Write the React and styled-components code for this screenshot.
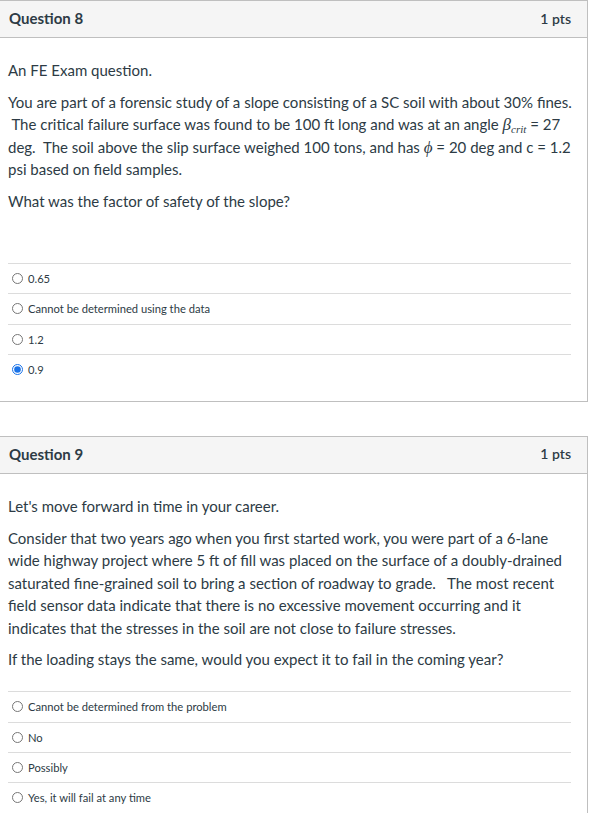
import React from "react";
import styled, { createGlobalStyle } from "styled-components";

const Global = createGlobalStyle`
  html, body { margin: 0; padding: 0; background: #fff; }
  body { font-family: Lato, "Noto Sans", "Liberation Sans", sans-serif; color: #2d3b45; }
`;

const Page = styled.div`
  width: 589px;
  margin-left: -1px;
  display: flex;
  flex-direction: column;
  gap: 34px;
`;

const Card = styled.section`
  border: 1px solid #bfbfbf;
  background: #fff;
  padding-bottom: 16.5px;
`;

const Header = styled.header`
  box-sizing: border-box;
  height: 37px;
  display: flex;
  align-items: center;
  justify-content: space-between;
  padding: 0 16px 2px 9px;
  background: #f5f5f5;
  border-bottom: 1px solid #bfbfbf;
`;

const Title = styled.h2`
  margin: 0;
  font-size: 15px;
  font-weight: 700;
  color: #2d3b45;
`;

const Points = styled.span`
  font-size: 14px;
  font-weight: 600;
  color: #2d3b45;
`;

const Text = styled.div`
  padding: 12.25px 8px 11.75px 8px;
  font-size: 15px;
  line-height: 22.5px;
  p { margin: 9px 0; }
`;

const Blank = styled.p`
  line-height: 21px;
`;

const MathVar = styled.span`
  font-family: "Liberation Serif", "DejaVu Serif", serif;
  font-style: italic;
  font-size: 17px;
  line-height: 0;
  sub {
    font-size: 11px;
    line-height: 0;
    vertical-align: baseline;
    position: relative;
    top: 3px;
  }
`;

const Answers = styled.div`
  margin: 0 16px 0 8px;
`;

const Row = styled.label`
  height: 29.33px;
  border-top: 1px solid #dcdcdc;
  display: flex;
  align-items: center;
  gap: 5px;
  padding-left: 4px;
  font-size: 11.2px;
  color: #2d3b45;
`;

const Radio = styled.input.attrs({ type: "radio" })`
  width: 11px;
  height: 11px;
  margin: 0;
  accent-color: #1a73e8;
`;

function Question({ n, children, answers, name, checked }) {
  return (
    <Card>
      <Header>
        <Title>Question {n}</Title>
        <Points>1 pts</Points>
      </Header>
      <Text>{children}</Text>
      <Answers>
        {answers.map((a) => (
          <Row key={a}>
            <Radio name={name} defaultChecked={a === checked} />
            {a}
          </Row>
        ))}
      </Answers>
    </Card>
  );
}

export default function App() {
  return (
    <>
      <Global />
      <Page>
        <Question
          n={8}
          name="q8"
          checked="0.9"
          answers={["0.65", "Cannot be determined using the data", "1.2", "0.9"]}
        >
          <p>An FE Exam question.</p>
          <p>
            You are part of a forensic study of a slope consisting of a SC soil with about 30% fines.
            {" \u00a0"}The critical failure surface was found to be 100 ft long and was at an angle{" "}
            <MathVar>
              β<sub>crit</sub>
            </MathVar>{" "}
            = 27 deg.{"\u00a0"} The soil above the slip surface weighed 100 tons, and has{" "}
            <MathVar>ϕ</MathVar> = 20 deg and c = 1.2 psi based on field samples.
          </p>
          <p>What was the factor of safety of the slope?</p>
          <Blank>{"\u00a0"}</Blank>
        </Question>
        <Question
          n={9}
          name="q9"
          answers={[
            "Cannot be determined from the problem",
            "No",
            "Possibly",
            "Yes, it will fail at any time",
          ]}
        >
          <p>Let's move forward in time in your career.</p>
          <p>
            Consider that two years ago when you first started work, you were part of a 6-lane wide
            highway project where 5 ft of fill was placed on the surface of a doubly-drained saturated
            fine-grained soil to bring a section of roadway to grade.{"\u00a0\u00a0"} The most recent
            field sensor data indicate that there is no excessive movement occurring and it indicates
            that the stresses in the soil are not close to failure stresses.
          </p>
          <p>If the loading stays the same, would you expect it to fail in the coming year?</p>
        </Question>
      </Page>
    </>
  );
}
